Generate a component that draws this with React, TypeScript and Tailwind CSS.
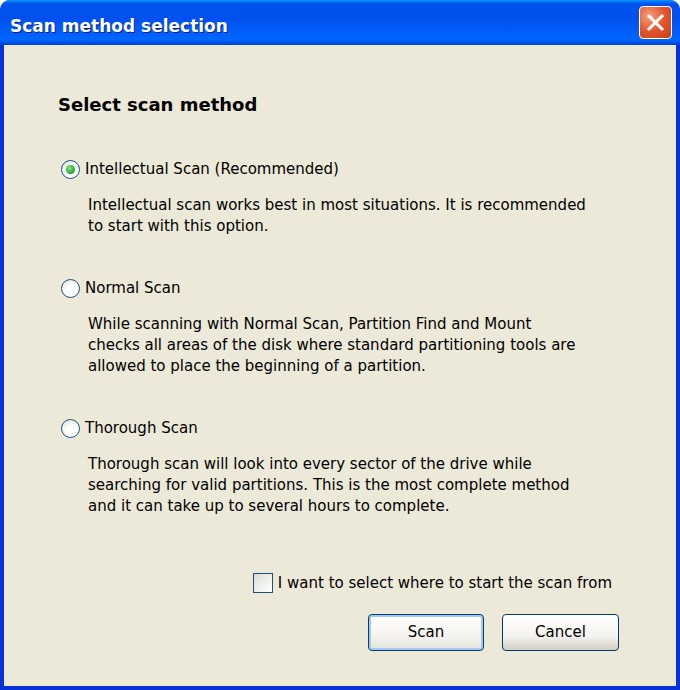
import React, { useState } from 'react';

const FONT = '"DejaVu Sans", Tahoma, sans-serif';

interface ScanOption {
  id: string;
  label: string;
  lines: string[];
}

const OPTIONS: ScanOption[] = [
  {
    id: 'intellectual',
    label: 'Intellectual Scan (Recommended)',
    lines: [
      'Intellectual scan works best in most situations. It is recommended',
      'to start with this option.',
    ],
  },
  {
    id: 'normal',
    label: 'Normal Scan',
    lines: [
      'While scanning with Normal Scan, Partition Find and Mount',
      'checks all areas of the disk where standard partitioning tools are',
      'allowed to place the beginning of a partition.',
    ],
  },
  {
    id: 'thorough',
    label: 'Thorough Scan',
    lines: [
      'Thorough scan will look into every sector of the drive while',
      'searching for valid partitions. This is the most complete method',
      'and it can take up to several hours to complete.',
    ],
  },
];

function Radio({ checked }: { checked: boolean }) {
  return (
    <span className="w-[19px] h-[19px] rounded-full border-[1.5px] border-[#1c5180] bg-[radial-gradient(circle_at_60%_65%,#ffffff_0%,#ffffff_35%,#dcdcd6_100%)] flex items-center justify-center flex-shrink-0">
      {checked && (
        <span className="w-[9px] h-[9px] rounded-full bg-[radial-gradient(circle_at_40%_35%,#7ee68a_0%,#21a121_70%,#1a8a1a_100%)]" />
      )}
    </span>
  );
}

export default function App() {
  const [method, setMethod] = useState('intellectual');
  const [pickStart, setPickStart] = useState(false);

  return (
    <div
      className="w-[680px] h-[690px] flex flex-col bg-[#0831d9] rounded-t-[10px] overflow-hidden"
      style={{ fontFamily: FONT }}
    >
      {/* Title bar */}
      <div className="h-[45px] flex-shrink-0 flex items-center justify-between pl-[10px] pr-[8px] bg-[linear-gradient(180deg,#0997ff_0%,#0053ee_8%,#0050ee_40%,#06f_88%,#0055e5_94%,#003dd7_100%)]">
        <span className="text-white font-bold text-[17px] pt-[8px] [text-shadow:1px_1px_0_#0a1a8a]">
          Scan method selection
        </span>
        <button className="w-[33px] h-[33px] rounded-[4px] border border-white bg-[radial-gradient(circle_at_30%_30%,#f4a080_0%,#e2552c_50%,#c8401a_100%)] flex items-center justify-center">
          <svg width="19" height="19" viewBox="0 0 19 19">
            <path d="M3 3L16 16M16 3L3 16" stroke="#ffffff" strokeWidth="3" strokeLinecap="square" />
          </svg>
        </button>
      </div>

      {/* Body */}
      <div className="flex-1 mx-[4px] mb-[4px] bg-[#ece9d8] text-[#000] text-[15px] flex flex-col pl-[54px] pr-[56px] pt-[48px]">
        <h3 className="font-bold text-[18px] leading-[24px] mb-[41px]">Select scan method</h3>

        <div className="flex flex-col">
          {OPTIONS.map((opt) => (
            <div key={opt.id} className="mb-[40px]">
              <label
                className="flex items-center gap-[5px] ml-[3px] h-[22px] cursor-default"
                onClick={() => setMethod(opt.id)}
              >
                <Radio checked={method === opt.id} />
                <span className="leading-[22px]">{opt.label}</span>
              </label>
              <div className="ml-[30px] mt-[15px] leading-[21px]">
                {opt.lines.map((line, i) => (
                  <div key={i}>{line}</div>
                ))}
              </div>
            </div>
          ))}
        </div>

        {/* Start location checkbox */}
        <div className="flex justify-end mt-[15px] mr-[8px]">
          <label
            className="flex items-center gap-[5px] cursor-default"
            onClick={() => setPickStart(!pickStart)}
          >
            <span className="w-[20px] h-[20px] border-[1.5px] border-[#1c5180] bg-[linear-gradient(135deg,#dcdcd6_0%,#ffffff_100%)] flex items-center justify-center">
              {pickStart && (
                <svg width="12" height="12" viewBox="0 0 12 12">
                  <path d="M1 6l3 3 7-7" stroke="#21a121" strokeWidth="2.5" fill="none" />
                </svg>
              )}
            </span>
            <span className="leading-[22px]">I want to select where to start the scan from</span>
          </label>
        </div>

        {/* Buttons */}
        <div className="flex justify-end gap-[18px] mt-[20px] mr-[1px]">
          <button className="w-[116px] h-[37px] rounded-[4px] border border-[#003c74] bg-[linear-gradient(180deg,#ffffff_0%,#f4f3ee_60%,#e3e2da_100%)] shadow-[inset_0_0_0_2px_#a6c6f4] text-[15px]">
            Scan
          </button>
          <button className="w-[117px] h-[37px] rounded-[4px] border border-[#003c74] bg-[linear-gradient(180deg,#ffffff_0%,#f4f3ee_60%,#d6d0c5_100%)] text-[15px]">
            Cancel
          </button>
        </div>
      </div>
    </div>
  );
}
